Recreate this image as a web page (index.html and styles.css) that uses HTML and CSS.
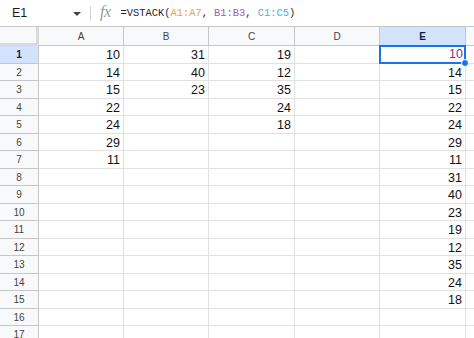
FILE: index.html
```html
<!DOCTYPE html>
<html>
<head>
<meta charset="utf-8">
<link rel="stylesheet" href="styles.css">
</head>
<body>
<div class="fbar">
  <div class="namebox">E1</div>
  <div class="caret"></div>
  <div class="sep"></div>
  <div class="fx">fx</div>
  <div class="formula">=VSTACK(<span class="o">A1:A7</span>, <span class="p">B1:B3</span>, <span class="t">C1:C5</span>)</div>
</div>
<div class="grid">
  <div class="corner"></div><div class="ch">A</div><div class="ch">B</div><div class="ch">C</div><div class="ch">D</div><div class="ch sel">E</div><div class="ch last"></div>

  <div class="rh sel">1</div><div class="c">10</div><div class="c">31</div><div class="c">19</div><div class="c"></div><div class="c active">10<span class="handle"></span></div><div class="c last"></div>
  <div class="rh">2</div><div class="c">14</div><div class="c">40</div><div class="c">12</div><div class="c"></div><div class="c">14</div><div class="c last"></div>
  <div class="rh">3</div><div class="c">15</div><div class="c">23</div><div class="c">35</div><div class="c"></div><div class="c">15</div><div class="c last"></div>
  <div class="rh">4</div><div class="c">22</div><div class="c"></div><div class="c">24</div><div class="c"></div><div class="c">22</div><div class="c last"></div>
  <div class="rh">5</div><div class="c">24</div><div class="c"></div><div class="c">18</div><div class="c"></div><div class="c">24</div><div class="c last"></div>
  <div class="rh">6</div><div class="c">29</div><div class="c"></div><div class="c"></div><div class="c"></div><div class="c">29</div><div class="c last"></div>
  <div class="rh">7</div><div class="c">11</div><div class="c"></div><div class="c"></div><div class="c"></div><div class="c">11</div><div class="c last"></div>
  <div class="rh">8</div><div class="c"></div><div class="c"></div><div class="c"></div><div class="c"></div><div class="c">31</div><div class="c last"></div>
  <div class="rh">9</div><div class="c"></div><div class="c"></div><div class="c"></div><div class="c"></div><div class="c">40</div><div class="c last"></div>
  <div class="rh">10</div><div class="c"></div><div class="c"></div><div class="c"></div><div class="c"></div><div class="c">23</div><div class="c last"></div>
  <div class="rh">11</div><div class="c"></div><div class="c"></div><div class="c"></div><div class="c"></div><div class="c">19</div><div class="c last"></div>
  <div class="rh">12</div><div class="c"></div><div class="c"></div><div class="c"></div><div class="c"></div><div class="c">12</div><div class="c last"></div>
  <div class="rh">13</div><div class="c"></div><div class="c"></div><div class="c"></div><div class="c"></div><div class="c">35</div><div class="c last"></div>
  <div class="rh">14</div><div class="c"></div><div class="c"></div><div class="c"></div><div class="c"></div><div class="c">24</div><div class="c last"></div>
  <div class="rh">15</div><div class="c"></div><div class="c"></div><div class="c"></div><div class="c"></div><div class="c">18</div><div class="c last"></div>
  <div class="rh">16</div><div class="c"></div><div class="c"></div><div class="c"></div><div class="c"></div><div class="c"></div><div class="c last"></div>
  <div class="rh">17</div><div class="c"></div><div class="c"></div><div class="c"></div><div class="c"></div><div class="c"></div><div class="c last"></div>
</div>
</body>
</html>
```
FILE: styles.css
```css
* { box-sizing: border-box; }
html, body { margin: 0; padding: 0; background: #fff; overflow: hidden; }
body { width: 474px; height: 338px; font-family: "Liberation Sans", Arial, sans-serif; }

.fbar {
  height: 27px;
  border-bottom: 1px solid #c7c7c7;
  display: flex;
  align-items: center;
}
.namebox {
  font-size: 12.5px;
  color: #1f1f1f;
  margin-left: 12px;
  width: 61px;
}
.caret {
  width: 0; height: 0;
  border-left: 4px solid transparent;
  border-right: 4px solid transparent;
  border-top: 4px solid #444;
  margin-top: 1px;
}
.sep {
  width: 1px; height: 15px;
  background: #d3d3d3;
  margin-left: 9px;
}
.fx {
  font-family: "Liberation Serif", serif;
  font-style: italic;
  font-size: 16px;
  color: #9a9a9a;
  margin-left: 9px;
  margin-top: -2px;
  letter-spacing: -0.5px;
}
.formula {
  font-family: "Liberation Mono", "DejaVu Sans Mono", monospace;
  font-size: 10.4px;
  color: #1f1f1f;
  margin-left: 10px;
}
.o { color: #e8a13a; }
.p { color: #9b5fb5; }
.t { color: #4fb0c6; }

.grid {
  display: grid;
  grid-template-columns: 39px 85px 85px 86px 85px 86px 1fr;
  grid-template-rows: 19px repeat(8, 18px 17px) 18px;
}
.corner {
  background: #f8f9fa;
  border-right: 3px solid #d7d9dc;
  border-bottom: 3px solid #d7d9dc;
}
.ch {
  background: #f8f9fa;
  border-right: 1px solid #c7c7c7;
  border-bottom: 1px solid #c7c7c7;
  font-size: 10px;
  color: #444;
  display: flex;
  align-items: center;
  justify-content: center;
  padding-top: 1px;
}
.ch.sel {
  background: #d3e3fd;
  color: #0b1f44;
  font-weight: bold;
}
.ch.last { border-right: none; }
.rh {
  background: #f8f9fa;
  border-right: 1px solid #c7c7c7;
  border-bottom: 1px solid #c7c7c7;
  font-size: 10px;
  color: #444;
  display: flex;
  align-items: center;
  justify-content: center;
}
.rh.sel {
  background: #d3e3fd;
  color: #0b1f44;
  font-weight: bold;
}
.c {
  border-right: 1px solid #e1e1e1;
  border-bottom: 1px solid #e1e1e1;
  font-size: 12.5px;
  color: #111;
  text-align: right;
  padding-right: 3px;
  line-height: 18px;
  position: relative;
}
.c.last { border-right: none; }
.c.active {
  border: 2px solid #1a73e8;
  line-height: 15px;
  padding-right: 1px;
  color: #8a2f8c;
  margin-left: -1px;
  margin-top: -1px;
  z-index: 2;
}
.handle {
  position: absolute;
  right: -5px;
  bottom: -5px;
  width: 8px;
  height: 8px;
  border-radius: 50%;
  background: #1a73e8;
  border: 1px solid #fff;
}
```
